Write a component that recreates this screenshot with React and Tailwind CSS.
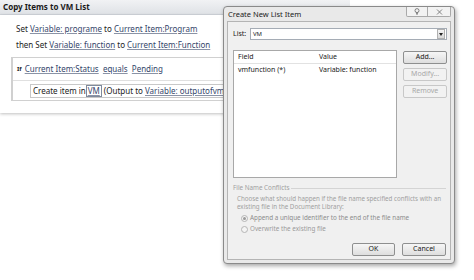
const FONT = { fontFamily: '"Noto Sans", "Open Sans", sans-serif' };

function Lnk({ children }) {
  return <span className="text-[#34466a] underline decoration-[#8a93a6] underline-offset-[1px]">{children}</span>;
}

function Btn({ children, disabled, className = '' }) {
  return (
    <div
      className={`h-[13px] flex items-center justify-center rounded-[2px] border text-[7px] ${
        disabled
          ? 'border-[#c8c8c8] bg-[#f2f2f2] text-[#a8a8a8]'
          : 'border-[#8e8f8f] bg-gradient-to-b from-[#f6f6f6] to-[#dedede] text-[#1a1a1a]'
      } ${className}`}
    >
      {children}
    </div>
  );
}

function Radio({ checked }) {
  return (
    <span className="w-[7px] h-[7px] rounded-full border border-[#b5b5b5] bg-[#f4f4f4] flex items-center justify-center">
      {checked && <span className="w-[3px] h-[3px] rounded-full bg-[#9a9a9a]" />}
    </span>
  );
}

export default function App() {
  return (
    <div className="relative w-[474px] h-[280px] bg-white overflow-hidden" style={FONT}>
      {/* workflow designer */}
      <div className="w-[390px]">
        <div className="h-[15px] w-[350px] bg-gradient-to-b from-[#f1f2f4] to-[#dfe2e6] border-b border-[#d2d6dc] flex items-center pl-[3px]">
          <span className="text-[8px] font-bold text-[#1a1a1a]">Copy Items to VM List</span>
        </div>
        <div className="h-[98px] bg-white shadow-[0_1px_3px_rgba(0,0,0,0.25)] pt-[8px] text-[8px] text-[#222]">
          <div className="pl-[16px] h-[12px] flex items-center">
            <span>Set&nbsp;<Lnk>Variable: programe</Lnk>&nbsp;to&nbsp;<Lnk>Current Item:Program</Lnk></span>
          </div>
          <div className="pl-[16px] h-[12px] mt-[4px] flex items-center">
            <span>then Set&nbsp;<Lnk>Variable: function</Lnk>&nbsp;to&nbsp;<Lnk>Current Item:Function</Lnk></span>
          </div>
          <div className="ml-[11px] mt-[6px] h-[44px] border-l-2 border-t border-b border-[#d0d0d0]">
            <div className="h-[23px] border-b border-[#e0e0e0] flex items-center pl-[4px]">
              <span className="text-[6px] font-bold mr-[3px]">If</span>
              <span><Lnk>Current Item:Status</Lnk>&nbsp; <Lnk>equals</Lnk>&nbsp; <Lnk>Pending</Lnk></span>
            </div>
            <div className="ml-[17px] mt-[3px] h-[14px] border border-[#c8c8c8] flex items-center pl-[2px]">
              <span>Create item in</span>
              <span className="border border-[#7f8a9c] px-[1px] leading-[10px]"><Lnk>VM</Lnk></span>
              <span>&nbsp;(Output to&nbsp;<Lnk>Variable: outputofvm</Lnk>&nbsp;)</span>
            </div>
          </div>
        </div>
      </div>

      {/* dialog window */}
      <div className="absolute left-[223px] top-[6px] w-[232px] h-[258px] rounded-[4px] border border-[#8a8a8a] bg-[#e9e9e9] shadow-[1px_2px_4px_rgba(0,0,0,0.35)] flex flex-col">
        <div className="h-[14px] flex items-start justify-between">
          <span className="pl-[4px] pt-[2px] text-[7.5px] text-[#1a1a1a]">Create New List Item</span>
          <div className="flex mr-[3px] border border-t-0 border-[#a9a9a9] rounded-b-[2px] bg-[#f2f2f2] h-[10px]">
            <div className="w-[21px] flex items-center justify-center border-r border-[#a9a9a9]">
              <svg width="6" height="7" viewBox="0 0 6 7">
                <circle cx="3" cy="2.6" r="2" fill="none" stroke="#666" strokeWidth="0.8" />
                <rect x="2.3" y="4.6" width="1.4" height="2" fill="#666" />
              </svg>
            </div>
            <div className="w-[22px] flex items-center justify-center">
              <svg width="7" height="6" viewBox="0 0 7 6">
                <path d="M1 0.5 L6 5.5 M6 0.5 L1 5.5" stroke="#777" strokeWidth="0.9" fill="none" />
              </svg>
            </div>
          </div>
        </div>
        <div className="flex-1 mx-[3px] mb-[3px] border border-[#b4b4b4] bg-[#f0f0f0] pl-[5px] pr-[3px] pt-[6px] text-[7px] text-[#1a1a1a]">
          <div className="h-[12px] flex items-center">
            <span className="w-[17px]">List:</span>
            <div className="flex-1 h-[12px] border border-[#a5acb5] bg-white flex items-center justify-between pl-[2px]">
              <span className="text-[6px]">VM</span>
              <div className="w-[8px] h-[10px] mr-[1px] border border-[#b0b0b0] bg-gradient-to-b from-[#f4f4f4] to-[#d8d8d8] flex items-center justify-center">
                <svg width="4" height="3" viewBox="0 0 4 3"><path d="M0 0 H4 L2 3 Z" fill="#222" /></svg>
              </div>
            </div>
          </div>

          <div className="mt-[10px] flex gap-[6px]">
            <div className="w-[165px] h-[128px] border border-[#a8a8a8] bg-white">
              <div className="h-[13px] border-b border-[#e2e2e2] flex items-center">
                <span className="pl-[4px] w-[85px]">Field</span>
                <span>Value</span>
              </div>
              <div className="h-[13px] flex items-center">
                <span className="pl-[4px] w-[85px]">vmfunction (*)</span>
                <span>Variable: function</span>
              </div>
            </div>
            <div className="w-[44px] flex flex-col gap-[4px] mt-[1px]">
              <Btn>Add...</Btn>
              <Btn disabled>Modify...</Btn>
              <Btn disabled>Remove</Btn>
            </div>
          </div>

          <div className="mt-[5px] h-[10px] flex items-center text-[6.3px] text-[#a0a0a0] pr-[1px]">
            <span>File Name Conflicts</span>
            <div className="flex-1 ml-[1px] border-t border-[#d4d4d4]" />
          </div>
          <div className="pl-[4px] mt-[2px] text-[6.2px] leading-[7.5px] text-[#a0a0a0] whitespace-nowrap">
            <div>Choose what should happen if the file name specified conflicts with an</div>
            <div>existing file in the Document Library:</div>
          </div>
          <div className="pl-[8px] mt-[3px] h-[10px] flex items-center gap-[2px] text-[6.3px] text-[#8c8c8c] whitespace-nowrap">
            <Radio checked />
            <span>Append a unique identifier to the end of the file name</span>
          </div>
          <div className="pl-[8px] mt-[1px] h-[10px] flex items-center gap-[2px] text-[6.3px] text-[#9a9a9a]">
            <Radio />
            <span>Overwrite the existing file</span>
          </div>
          <div className="mt-[9px] flex justify-end gap-[7px] pr-[1px]">
            <Btn className="w-[43px]">OK</Btn>
            <Btn className="w-[44px]">Cancel</Btn>
          </div>
        </div>
      </div>
    </div>
  );
}
